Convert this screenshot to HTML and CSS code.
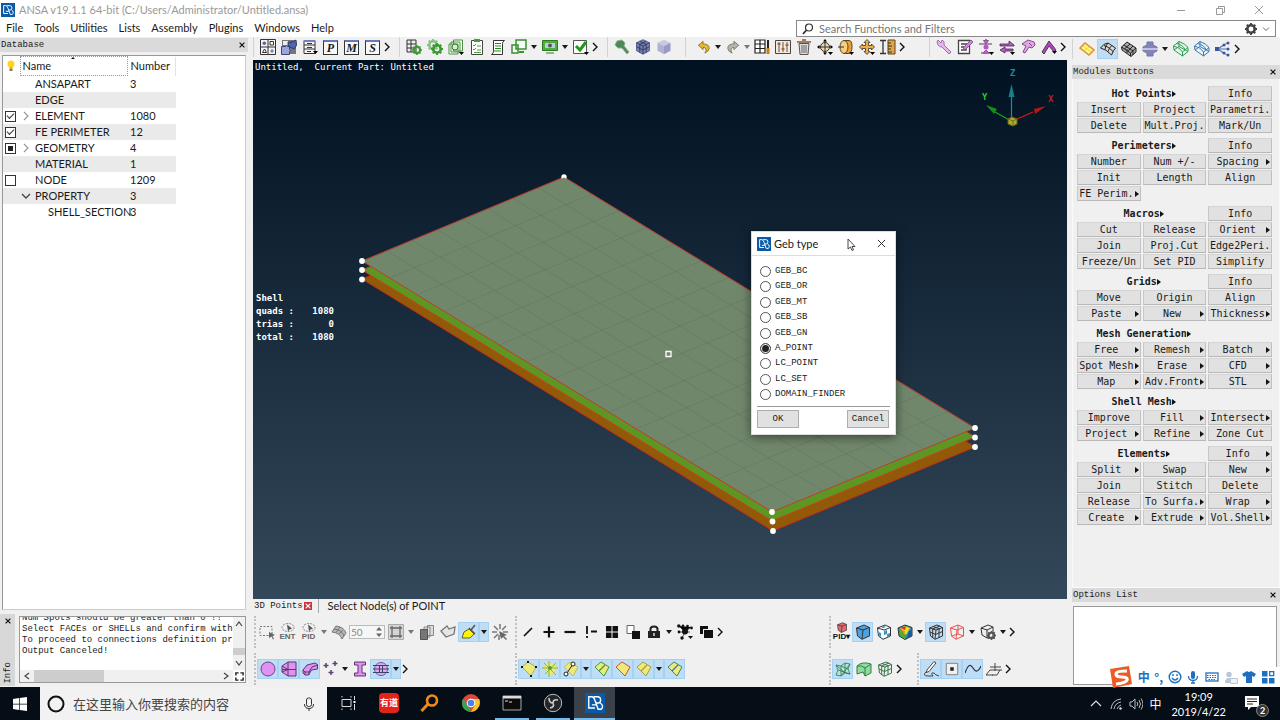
FILE: index.html
```html
<!DOCTYPE html>
<html lang="en">
<head>
<meta charset="utf-8">
<title>ANSA v19.1.1 64-bit</title>
<link rel="stylesheet" href="styles.css">
</head>
<body>
<svg class="sprite" aria-hidden="true">
<defs>
<symbol id="logo" viewBox="0 0 16 16"><path fill="#0b5aa5" d="M0 0h16v16H0z"/><path fill="none" stroke="#fff" stroke-width="1.100" d="M8 12H3V3h2.500q1.500 0 2.500 3l2.500 7H13q1-1 1-2.500T12 8M5.500 9.500H9M7 3h3q2.500 0 2.500 2.500T10.500 8H9"/></symbol>
<symbol id="grid4" viewBox="0 0 16 16"><path fill="#f4f4f4" stroke="#333" d="M.5.5h15v15H.5zM8 1v14M1 8h14"/><circle cx="4.300" cy="4.300" r="1.800" fill="#5768a8"/><path fill="#fff" stroke="#333" d="M10 2.500h3.500V6H10zM2.500 13.500l2-3.500 2 3.500z"/><circle cx="12" cy="12" r="1.700" fill="#7486c5"/></symbol>
<symbol id="puzzle" viewBox="0 0 16 16"><path fill="#777" d="M1 1h14v14H1z"/><path fill="#eee" d="M2 2h5v4H2z"/><path fill="#99a5dc" stroke="#39457c" d="M.5 7.500h4q1-2 2 0h2v3q3 1 0 2v3h-8z"/><path fill="#5265aa" stroke="#303a70" d="M7 3l3 1q0-3 2-1l3-2 .5 5-2 4-5-2q-2-2-1.500-5z"/></symbol>
<symbol id="drawer" viewBox="0 0 16 16"><path fill="#f7f7f7" stroke="#333" d="M2 1.500h11v13H2zM2 6h11M2 10h11"/><path fill="#6e80be" d="M2 1h11v2H2z"/><path stroke="#333" d="M5 4.500h5M5 8.500h5M5 12.500h4"/><path d="M11 12h5l-2.500 3z"/></symbol>
<symbol id="gear" viewBox="0 0 16 16"><circle cx="8" cy="8" r="5" fill="none" stroke="currentColor" stroke-width="3.500"/><path fill="none" stroke="currentColor" stroke-width="2.500" d="M8 0v3M8 13v3M0 8h3M13 8h3M2.300 2.300l2 2M11.700 11.700l2 2M2.300 13.700l2-2M11.700 4.300l2-2"/></symbol>
<symbol id="meshgear" viewBox="0 0 16 16"><path fill="#eee" stroke="#333" d="M1 1h9v12H1zM5 1v12M1 5h9M1 9h9"/><use href="#gear" x="6" y="6" width="10" height="10" color="#3f9a33"/></symbol>
<symbol id="gears" viewBox="0 0 16 16"><use href="#gear" x="0" y="0" width="12" height="12" color="#8ac086"/><use href="#gear" x="4" y="4" width="12" height="12" color="#3a9a30"/></symbol>
<symbol id="pages" viewBox="0 0 16 16"><path fill="#fff" stroke="#4c8f40" d="M5.500 1h9v11h-9zM3 3h9v10H3zM1 5h9v10H1z"/><circle cx="7" cy="8" r="3" fill="#d8ecd4" stroke="#26831f"/><path d="M11 13h5l-2.500 3z"/></symbol>
<symbol id="clip" viewBox="0 0 16 16"><path fill="#fff" stroke="#444" d="M2.500 1.500h11v14h-11z"/><path fill="#4c9a3c" d="M5 0h6v3H5z"/><path stroke="#4c9a3c" fill="none" d="M4 6l1 1 2-2M4 10l1 1 2-2M8 7h4M8 11h4M5 13.500h7"/></symbol>
<symbol id="scroll" viewBox="0 0 16 16"><path fill="#fff" stroke="#333" d="M3.500 1.500h11q-2 1-2 3v11h-11q2-1 2-3z"/><path stroke="#268a21" d="M5 4.500h6M5 7h6M5 9.500h6M4 12h7"/></symbol>
<symbol id="screens" viewBox="0 0 16 16"><path fill="#f4faf4" stroke="#3a9030" stroke-width="1.500" d="M5 1h10v9H5zM1 6h6v8H1z"/><path stroke="#3a9030" stroke-width="2" d="M8 13h5"/></symbol>
<symbol id="monitor" viewBox="0 0 16 16"><path fill="#4faf3c" stroke="#2d7a22" d="M.5 1.500h15v10H.5zM4 14h8"/><path fill="#bcd" d="M3 4h10v5H3z"/><circle cx="8" cy="6.500" r="2" fill="#555"/></symbol>
<symbol id="check" viewBox="0 0 16 16"><path fill="#fff" stroke="#555" d="M.5 1.500h13v13H.5z"/><path fill="none" stroke="#219619" stroke-width="3" d="M3 7l4 4 6-8"/><path d="M11 13h5l-2.500 3z"/></symbol>
<symbol id="torch" viewBox="0 0 16 16"><path fill="#4e8955" stroke="#8aae8b" d="M3 2l5-1 3 3-1 3 5 6-2 2-5-6-4 0-3-3z"/></symbol>
<symbol id="cube" viewBox="0 0 16 16"><path fill="currentColor" stroke="#39436f" stroke-width=".7" d="M8 .7l6.500 3v8L8 15.300l-6.500-3.600v-8z"/><path fill="none" stroke="#24304f" stroke-width=".8" d="M1.500 3.700L8 7l6.500-3.300M8 7v8M4.800 2.200l6.400 3.200v8.200M11.200 2.200L4.800 5.400v8.200M1.500 7.700L8 11l6.500-3.300"/></symbol>
<symbol id="softcube" viewBox="0 0 16 16"><path fill="#c8cae4" d="M8 .7l6.500 3L8 7 1.500 3.700z"/><path fill="#aeb1d2" d="M1.500 3.700L8 7v8.300l-6.500-3.600z"/><path fill="#989bc3" d="M14.500 3.700L8 7v8.300l6.500-3.600z"/></symbol>
<symbol id="undo" viewBox="0 0 16 16"><path fill="currentColor" stroke="#5b4a1c" stroke-width=".7" d="M1.500 6L7 1.500V4.500q7 0 7 5 0 3-5 5.500 2-3 1-5-1-1.500-3-1.500V11z"/></symbol>
<symbol id="tablepen" viewBox="0 0 16 16"><path fill="#fff" stroke="#222" stroke-width="1.200" d="M1 1h10v13H1zM6 1v13M1 5h10M1 9.500h10"/><path stroke="#222" stroke-width="2" d="M14 1v8"/><path stroke="#c48018" stroke-width="3" d="M14 9v6"/></symbol>
<symbol id="sliders" viewBox="0 0 16 16"><path fill="#f5e9dd" stroke="#444" d="M.5 1.500h15v13H.5z"/><path stroke="#555" d="M4 3v10M8 3v10M12 3v10"/><path stroke="#b34d22" stroke-width="1.500" d="M2.500 5h3M6.500 10h3M10.500 6h3"/></symbol>
<symbol id="trash" viewBox="0 0 16 16"><path fill="#ddd" stroke="#555" d="M3 4.500h10l-1 11H4z"/><path stroke="#666" d="M6 6v8M8 6v8M10 6v8"/><path stroke="#9a8262" stroke-width="2" d="M1 3h14M6 1h4"/></symbol>
<symbol id="target" viewBox="0 0 16 16"><circle cx="8" cy="8" r="4.500" fill="#eed8a8" stroke="#333"/><path stroke="#333" d="M8 2v12M2 8h12"/><path d="M8 0l2 2.500H6zM8 16l2-2.500H6zM0 8l2.500-2v4zM16 8l-2.500-2v4z"/><path d="M11 13h5l-2.500 3z"/></symbol>
<symbol id="barrel" viewBox="0 0 16 16"><path fill="#e9a33d" stroke="#5b431b" d="M6 1.500h5q3 0 3 6t-3 7H6z"/><ellipse cx="6" cy="8" rx="4" ry="6.500" fill="#f8cd7c" stroke="#5b431b"/><path stroke="#333" d="M0 8h6"/><path d="M11 13h5l-2.500 3z"/></symbol>
<symbol id="move" viewBox="0 0 16 16"><path fill="#edac45" stroke="#333" stroke-width=".8" d="M8 .5l3 3H9.500v3h3V5l3 3-3 3V9.500h-3v3H11l-3 3-3-3h1.500v-3h-3V11l-3-3 3-3v1.500h3v-3H5z"/><path d="M11 13h5l-2.500 3z"/></symbol>
<symbol id="ruler" viewBox="0 0 16 16"><path stroke="#333" stroke-width="1.300" d="M0 1.500h6M0 14.500h6M3 2v12"/><path fill="#e1a648" stroke="#5a461b" d="M8 1h7v14H8z"/><path stroke="#333" d="M8 4h3M8 7h4M8 10h3M8 13h4"/></symbol>
<symbol id="wrench" viewBox="0 0 16 16"><path fill="#e7b7ed" stroke="#a06aaa" d="M2 1l3 3 1-3q3 1 2 5l7 7-2 2-7-7q-4 0-5-5z"/></symbol>
<symbol id="note" viewBox="0 0 16 16"><path fill="#fff" stroke="#444" stroke-width="1.300" d="M1.500 1.500h11v13h-11zM4 5h6M4 8h4M4 11h6"/><path fill="#dd7de8" stroke="#865c92" d="M14 1l2 2-7 7-3 1 1-3z"/></symbol>
<symbol id="compress" viewBox="0 0 16 16"><path stroke="#444" stroke-width="1.200" d="M1 5h13M3 14h9M8 0v5"/><path fill="#d064e0" stroke="#875192" d="M5.500 1.500h5L8 5zM8 11l3 3H5z"/><circle cx="8" cy="8" r="2.500" fill="#c34bd6"/><path d="M11 13h5l-2.500 3z"/></symbol>
<symbol id="swap" viewBox="0 0 16 16"><path fill="#c453d7" stroke="#3a2a3e" stroke-width=".8" d="M1 5h9V2l5 4v1H1zM14 10H6V8l-5 3 5 3v-2h8z"/><path d="M11 13h5l-2.500 3z"/></symbol>
<symbol id="hammer" viewBox="0 0 16 16"><path fill="#e3a6eb" stroke="#7b5080" d="M2 5l6-4 6 2 1 3-3 3-3-1-4 6-2-1 3-6-2-1z"/><path stroke="#7b5080" d="M9 4l3 3"/></symbol>
<symbol id="angle" viewBox="0 0 16 16"><path fill="#b63dc8" stroke="#444" d="M1 13L8 2l7 9-2 2-5-6-5 8z"/><path d="M11 12h5l-2.500 3z"/></symbol>
<symbol id="facey" viewBox="0 0 16 16"><path fill="#fff880" stroke="#df8d3d" stroke-width="1.500" d="M1 7l5-5 9 7-5 5z"/><path stroke="#d7cf28" stroke-dasharray="2 1" d="M4 5l8 6M4 11l7-6"/></symbol>
<symbol id="mesh" viewBox="0 0 16 16"><path fill="currentColor" stroke="#222" d="M.5 7Q4 2 8 2l7.500 5q-2 2-4 7Q6 8 .5 7z"/><path fill="none" stroke="#222" d="M4 4.500q5 1 9 6M8 2q-3 3-3 6.500M12 4.500q-3 2-4 6"/></symbol>
<symbol id="solidmesh" viewBox="0 0 16 16"><path fill="#a8a8a8" stroke="#222" d="M.5 6L6 1l9 6v4l-5 4.500L1 9z"/><path fill="none" stroke="#222" d="M.5 6l9 6L15 7M3 4l9 6v4M6 8v4M9.500 12v3M9 3L3.500 8M12 5L7 10"/></symbol>
<symbol id="section" viewBox="0 0 16 16"><path fill="#8484b8" stroke="#7373aa" d="M5 1h6v3l4 2v4l-4 2v3H5v-3l-4-2V6l4-2z"/><path stroke="#d9d9ef" stroke-width="1.500" d="M0 8h16"/></symbol>
<symbol id="wiremesh" viewBox="0 0 16 16"><path fill="#e8f5ec" fill-opacity=".6" stroke="currentColor" d="M.5 5L6 .5q6 2 9 6v4L9.500 15 1 9z"/><path fill="none" stroke="currentColor" d="M.5 5q6 1 9 6L15 6.500M6 .5v5L1 9M6 5.500l9 5M9.500 11v4M3.500 2.500Q10 4 12 8.500"/></symbol>
<symbol id="spread" viewBox="0 0 16 16"><path stroke="#5470b0" d="M3 8h10M3 8l9-6M3 8l9 6M3 8l5-4M3 8l5 4"/><path fill="#3d56a4" d="M0 6h4v4H0z"/><g fill="#3d56a4"><circle cx="13" cy="2" r="1.500"/><circle cx="9" cy="4" r="1.500"/><circle cx="13" cy="8" r="1.500"/><circle cx="9" cy="12" r="1.500"/><circle cx="13" cy="14" r="1.500"/></g></symbol>
<symbol id="pick" viewBox="0 0 16 16"><path fill="none" stroke="#777" stroke-dasharray="2 1.500" d="M1 2.500h12v9H1z"/><path fill="#666" d="M10 8l6 3-2.500 1L15 15l-1 .5-1.500-3L10 14z"/></symbol>
<symbol id="pickring" viewBox="0 0 14 10"><ellipse cx="7" cy="5" rx="6" ry="4" fill="none" stroke="#888" stroke-dasharray="2 1"/><path fill="#555" d="M6 2l5 4-2.500 1L7 9z"/></symbol>
<symbol id="greymesh" viewBox="0 0 16 16"><path fill="#b5b5b5" stroke="#777" d="M1 8l4-6q8 1 10 7l-4 6Q9 9 1 8z"/><path fill="none" stroke="#777" d="M3 5q8 1 10 7M9 3L5 8.500M12 6l-4 4"/></symbol>
<symbol id="crop" viewBox="0 0 16 16"><path fill="#d4d4d4" stroke="#aaa" d="M.5.5h15v15H.5z"/><path fill="#eee" stroke="#666" stroke-width="1.300" d="M4 2v12M12 2v12M2 4h12M2 12h12"/></symbol>
<symbol id="copies" viewBox="0 0 16 16"><path fill="#ddd" stroke="#888" d="M8.500 1.500h6v10h-6zM5 3h6v10H5z"/><path fill="#777" stroke="#555" d="M1.500 5.500h7v10h-7z"/></symbol>
<symbol id="poly" viewBox="0 0 16 16"><path fill="#e5e5e5" stroke="#777" stroke-width="1.300" d="M1 7l6-5 2 3 6-2-1 7-8 3z"/></symbol>
<symbol id="marker" viewBox="0 0 16 16"><path fill="#fff500" stroke="#665f20" d="M1 14l2-6 5-3 5 5-4 4z"/><path stroke="#555" stroke-width="1.500" d="M8 4l6 6M10 6l4-5"/></symbol>
<symbol id="burst" viewBox="0 0 16 16"><path stroke="#777" stroke-width="1.500" d="M8 0v5M0 8h5M11 8h5M2 2l4 4M14 2l-4 4M2 14l4-4M7 11v5"/><path fill="#666" d="M7 7l8 4-3 1 3 3-1 1-3-3-2 2z"/></symbol>
<symbol id="line" viewBox="0 0 16 16"><path stroke="#111" stroke-width="1.700" d="M4 12l8-8"/></symbol>
<symbol id="plus" viewBox="0 0 16 16"><path stroke="#111" stroke-width="2.200" d="M8 2.500v11M2.500 8h11"/></symbol>
<symbol id="minus" viewBox="0 0 16 16"><path stroke="#111" stroke-width="2.200" d="M2.500 8h11"/></symbol>
<symbol id="bang" viewBox="0 0 16 16"><path stroke="#111" stroke-width="1.800" d="M4 2v8M4 12v2M8 7.500h6"/></symbol>
<symbol id="four" viewBox="0 0 16 16"><path fill="#111" d="M2 2h5.500v5.500H2zM8.500 2H14v5.500H8.500zM2 8.500h5.500V14H2zM8.500 8.500H14V14H8.500z"/></symbol>
<symbol id="invert" viewBox="0 0 16 16"><path fill="#fff" stroke="#666" d="M2 1.500h7v8H2z"/><path fill="#111" d="M7 7h8v8H7z"/></symbol>
<symbol id="lock" viewBox="0 0 16 16"><path fill="#222" d="M2 7h12v7H2z"/><path fill="none" stroke="#222" stroke-width="2" d="M4.500 7V5q0-2.500 3.500-2.500T11.500 5v2"/><path stroke="#ddd" stroke-width="1.500" d="M8 9v3"/></symbol>
<symbol id="cluster" viewBox="0 0 16 16"><path stroke="#111" stroke-width=".7" d="M2 2l6 6 6-5M3 8h10M5 14l3-6"/><g fill="#111"><circle cx="8" cy="7.500" r="3"/><circle cx="1.800" cy="2" r="1.700"/><circle cx="6" cy="1.800" r="1.300"/><circle cx="10.500" cy="2" r="1.300"/><circle cx="14.500" cy="4" r="1.400"/><circle cx="2" cy="8" r="1.400"/><circle cx="5" cy="14" r="1.700"/><path d="M11 12h5l-2.500 3z"/></g></symbol>
<symbol id="stack" viewBox="0 0 16 16"><path fill="#111" d="M2 2h8v3H5v5H2z"/><path fill="#111" d="M6 6h9v8H6z"/></symbol>
<symbol id="colorcube" viewBox="0 0 16 16"><path fill="currentColor" stroke="#333" d="M1.500 4L9 1l5.500 2.500V12L7 15.300 2.500 12z"/><path fill="none" stroke="#333" d="M1.500 4L8 6l6.500-2.500M8 6l-1 9"/></symbol>
<symbol id="checkcube" viewBox="0 0 16 16"><path fill="#fff" stroke="#333" d="M1.500 4L9 1l5.500 2.500V12L7 15.300 2.500 12z"/><path fill="#3b93c8" d="M8 7l3-1v4l3-1v3l-3 1v-3l-3 1zM2.500 8L5 9v4l-2.500-2zM5 3l3-1 2 1-3 1.300z"/><path fill="none" stroke="#333" d="M1.500 4L8 6l6.500-2.500"/></symbol>
<symbol id="rainbow" viewBox="0 0 16 16"><path fill="#2d94a8" stroke="#333" d="M1 4l7-3 7 2.500V12l-7 3.500L2 12z"/><path fill="#f0da22" d="M3 4l5-2 5 2-4 7z"/><path fill="#50ad30" d="M2 5l6 3v7l-5-3z"/><path fill="#ef9b20" d="M4 5l4 2v4z"/><path fill="#df3328" d="M3 3.800l6-1.500L8 6z"/><path fill="#1556ae" d="M12 7l2.500-1v6L10 14z"/></symbol>
<symbol id="wirecube" viewBox="0 0 16 16"><path fill="none" stroke="currentColor" d="M1.500 4L9 1l5.500 2.500V12L7 15.300 2.500 12zM1.500 4L8 6l6.500-2.500M8 6l-1 9M4.700 5v9M11 4.700v9M2 8l5.500 2.500 7-3M5 2.500l6.500 2.300M12 2L4.500 5"/></symbol>
<symbol id="redwire" viewBox="0 0 16 16"><path fill="none" stroke="#e55454" d="M1.500 4L9 1l5.500 2.500V12L7 15.300 2.500 12zM1.500 4L8 6l6.500-2.500M8 6l-1 9M9 1v9l5.500 2M9 10l-6.500 2"/></symbol>
<symbol id="cubegear" viewBox="0 0 16 16"><path fill="#eee" stroke="#333" d="M1 4l7-3 5 2v10l-6 1-5-3zM1 4l6 2 6-3M7 6v8"/><use href="#gear" x="7" y="7" width="9" height="9" color="#555"/></symbol>
<symbol id="disc" viewBox="0 0 16 16"><circle cx="8" cy="8" r="7" fill="#df91f4" stroke="#6a4775"/></symbol>
<symbol id="trap" viewBox="0 0 16 16"><path fill="#df91f4" stroke="#5d3969" d="M1 5l6-4h8v14H7l-6-4zM7 1v14M1 8.500h14M1 5l6 3.500L1 11"/></symbol>
<symbol id="bar3d" viewBox="0 0 16 16"><path fill="#df91f4" stroke="#5d3969" d="M1 9l4-5 8-2 2.500 1.500v4.500l-6 1-3 5H3l-2-2z"/><path fill="none" stroke="#5d3969" d="M1 9l2 2h4l3-5 5.500-2M3 11v3M7 11v3"/></symbol>
<symbol id="crosses" viewBox="0 0 16 16"><path stroke="#604070" stroke-width="1.500" d="M3 2v5M.5 4.500h5M12 0v5M9.500 2.500h5M8 9v5M5.500 11.500h5"/></symbol>
<symbol id="beam" viewBox="0 0 16 16"><path fill="#df91f4" stroke="#5d3969" d="M2.500 1h11v3H10v8h3.500v3h-11v-3H6V4H2.500z"/></symbol>
<symbol id="beamring" viewBox="0 0 16 16"><circle cx="8" cy="8" r="6.500" fill="#dfacf1" stroke="#6f5a93"/><path stroke="#35456d" d="M0 4.500h16M0 8h16M0 11.500h16M6.500 4v8M9.500 4v8"/></symbol>
<symbol id="yface" viewBox="0 0 16 16"><path fill="#eeea77" stroke="currentColor" d="M1 6l6-5 8 5-5 9z"/></symbol>
<symbol id="dots" viewBox="0 0 16 16"><path fill="#111" d="M0 5h2v2H0zM6 0h2v2H6zM14 5h2v2h-2zM9 14h2v2H9z"/></symbol>
<symbol id="rays" viewBox="0 0 16 16"><path stroke="#83ba42" d="M0 7h16M7 0v16M2 2l12 12M14 2L3 13"/><circle cx="8" cy="7" r="2" fill="#599c30"/></symbol>
<symbol id="ends" viewBox="0 0 16 16"><path stroke="#222" d="M4 12l6-9"/><circle cx="3" cy="13" r="2" fill="#fff" stroke="#222"/><circle cx="10" cy="3" r="2" fill="#fff" stroke="#222"/></symbol>
<symbol id="split" viewBox="0 0 16 16"><path stroke="currentColor" stroke-width="1.300" d="M5 10l6-6"/></symbol>
<symbol id="greencube" viewBox="0 0 16 16"><path fill="#8edb9d" stroke="#347d48" d="M1 5q5-5 14-2v9l-6 3-2-4-6 2z"/><path fill="none" stroke="#347d48" d="M1 5q5-1 8 2l6-4M9 7v8"/></symbol>
<symbol id="greenwire" viewBox="0 0 16 16"><path fill="#b8e2d1" stroke="#257c55" stroke-width=".8" d="M1 4l5 1 4-3 5 1-2 5 2 5-5-1-4 3-5-1 2-5zM1 4l9 8M6 5l7 3M3 9l12 4M15 3L6 15M6 5v10M10 2v10"/></symbol>
<symbol id="pencil" viewBox="0 0 16 16"><path fill="#fff" stroke="#444" d="M4 9L11 .5 13 2 6 10.500l-3 1z"/><path fill="none" stroke="#444" d="M3 11q-4 4 2 4h5q-3-4 1-3 1 2 5 3"/></symbol>
<symbol id="button" viewBox="0 0 16 16"><path fill="#f0f0f0" stroke="#777" d="M1.500 1.500h13v13h-13z"/><path fill="#222" d="M6 6h4v4H6z"/></symbol>
<symbol id="wave" viewBox="0 0 16 16"><path fill="none" stroke="#263344" stroke-width="1.200" d="M0 12Q4 0 8 7t8-2"/></symbol>
<symbol id="plane" viewBox="0 0 16 16"><path fill="none" stroke="#444" d="M0 14l4-5h12M6 14h5l3-5M4 6h11M9 2v8M0 14h7"/></symbol>
<symbol id="more" viewBox="0 0 8 12"><path fill="none" stroke="#111" stroke-width="1.400" d="M2 2l4 4-4 4"/></symbol>
<symbol id="caret" viewBox="0 0 8 6"><path fill="currentColor" d="M1 1h6L4 5z"/></symbol>
<symbol id="x" viewBox="0 0 10 10"><path fill="none" stroke="currentColor" d="M1 1l8 8M9 1L1 9"/></symbol>
</defs>
</svg>

<header class="titlebar">
  <svg class="i14"><use href="#logo"/></svg>
  <h1>ANSA v19.1.1 64-bit (C:/Users/Administrator/Untitled.ansa)</h1>
  <div class="winbtns">
    <button aria-label="Minimize"><svg viewBox="0 0 10 10"><path stroke="#999" d="M1 5.500h8"/></svg></button>
    <button aria-label="Restore"><svg viewBox="0 0 10 10"><path fill="none" stroke="#999" d="M1.500 3.500h6v6h-6zM3.500 3V1.500h6v6H8"/></svg></button>
    <button aria-label="Close"><svg><use href="#x"/></svg></button>
  </div>
</header>
<div class="menurow">
  <nav class="menu"><button>File</button><button>Tools</button><button>Utilities</button><button>Lists</button><button>Assembly</button><button>Plugins</button><button>Windows</button><button>Help</button></nav>
  <div class="search">
    <svg class="i12" viewBox="0 0 12 12"><circle cx="7" cy="4.500" r="3.500" fill="none" stroke="#333" stroke-width="1.200"/><path stroke="#333" stroke-width="1.800" d="M4.500 7L1 11"/></svg>
    <input type="search" placeholder="Search Functions and Filters" aria-label="Search Functions and Filters">
    <svg class="i12 dark"><use href="#gear"/></svg>
    <svg class="i8" viewBox="0 0 8 8"><path fill="none" stroke="#666" d="M1 2.500l3 3 3-3"/></svg>
  </div>
</div>

<div class="work">
  <aside class="left">
    <h2 class="dock">Database<button aria-label="Close Database"><svg><use href="#x"/></svg></button></h2>
    <div class="treebox">
      <table class="tree">
        <thead><tr><th><svg class="bulb" viewBox="0 0 8 12"><circle cx="4" cy="4" r="3.500" fill="#ffd21c"/><path fill="#e5ad10" d="M2.500 7h3v2h-3z"/><path fill="#777" d="M2.500 9h3v2h-3z"/></svg></th><th class="name">Name</th><th>Number</th></tr></thead>
        <tbody>
        <tr><td></td><td><span class="exp"></span>ANSAPART</td><td>3</td></tr>
        <tr><td></td><td><span class="exp"></span>EDGE</td><td></td></tr>
        <tr><td><input type="checkbox" checked aria-label="ELEMENT"></td><td><svg class="exp" viewBox="0 0 15 10"><path fill="none" stroke="#999" stroke-width="1.200" d="M4 1l4 4-4 4"/></svg>ELEMENT</td><td>1080</td></tr>
        <tr><td><input type="checkbox" checked aria-label="FE PERIMETER"></td><td><span class="exp"></span>FE PERIMETER</td><td>12</td></tr>
        <tr><td><input type="checkbox" class="part" aria-label="GEOMETRY"></td><td><svg class="exp" viewBox="0 0 15 10"><path fill="none" stroke="#999" stroke-width="1.200" d="M4 1l4 4-4 4"/></svg>GEOMETRY</td><td>4</td></tr>
        <tr><td></td><td><span class="exp"></span>MATERIAL</td><td>1</td></tr>
        <tr><td><input type="checkbox" aria-label="NODE"></td><td><span class="exp"></span>NODE</td><td>1209</td></tr>
        <tr><td></td><td><svg class="exp" viewBox="0 0 15 10"><path fill="none" stroke="#444" stroke-width="1.300" d="M2 3l4 4 4-4"/></svg>PROPERTY</td><td>3</td></tr>
        <tr><td></td><td class="deep">SHELL_SECTION</td><td>3</td></tr>
        </tbody>
      </table>
    </div>
    <section class="info">
      <div class="infotab"><button aria-label="Close Info"><svg><use href="#x"/></svg></button><span>Info</span></div>
      <div class="logbox">
        <div class="log"><p>Num Spots should be greater than 0 !!</p><p>Select FACEs or SHELLs and confirm with</p><p>To proceed to connections definition pr</p><p>Output Canceled!</p></div>
        <div class="vbar"><svg viewBox="0 0 8 8"><path fill="none" stroke="#444" stroke-width="1.200" d="M1 6l3-4 3 4"/></svg><i></i><svg viewBox="0 0 8 8"><path fill="none" stroke="#444" stroke-width="1.200" d="M1 2l3 4 3-4"/></svg></div>
        <div class="hbar"><svg viewBox="0 0 8 8"><path fill="none" stroke="#444" stroke-width="1.200" d="M6 1L2 4l4 3"/></svg><i></i><svg viewBox="0 0 8 8"><path fill="none" stroke="#444" stroke-width="1.200" d="M2 1l4 3-4 3"/></svg></div>
        <svg class="expand" viewBox="0 0 10 10"><path fill="none" stroke="#222" stroke-width="1.600" d="M1 4V1h3M6 1h3v3M9 6v3H6M4 9H1V6"/></svg>
      </div>
    </section>
  </aside>

  <main class="center">
    <div class="bar top">
      <div class="grp"><button><svg><use href="#grid4"/></svg></button><button><svg><use href="#puzzle"/></svg></button><button><svg><use href="#drawer"/></svg></button><button class="letter">P</button><button class="letter">M</button><button class="letter">S</button><button class="mo"><svg><use href="#more"/></svg></button></div>
      <div class="grp"><button><svg><use href="#meshgear"/></svg></button><button><svg><use href="#gears"/></svg></button><button><svg><use href="#pages"/></svg></button><button><svg><use href="#clip"/></svg></button><button><svg><use href="#scroll"/></svg></button><button><svg><use href="#screens"/></svg></button><button class="ca"><svg><use href="#caret"/></svg></button><button><svg><use href="#monitor"/></svg></button><button class="ca"><svg><use href="#caret"/></svg></button><button><svg><use href="#check"/></svg></button><button class="mo"><svg><use href="#more"/></svg></button></div>
      <div class="grp"><button><svg><use href="#torch"/></svg></button><button><svg color="#7482b5"><use href="#cube"/></svg></button><button><svg><use href="#softcube"/></svg></button></div>
      <div class="grp wide"><button><svg class="i14" color="#e5b62f"><use href="#undo"/></svg></button><button class="ca narrow"><svg><use href="#caret"/></svg></button><button><svg class="i14 flip" color="#b5b5b5"><use href="#undo"/></svg></button><button class="ca narrow grey"><svg><use href="#caret"/></svg></button><button><svg><use href="#tablepen"/></svg></button><button><svg><use href="#sliders"/></svg></button><button><svg><use href="#trash"/></svg></button><button><svg><use href="#target"/></svg></button><button><svg><use href="#barrel"/></svg></button><button><svg><use href="#move"/></svg></button><button><svg><use href="#ruler"/></svg></button><button class="mo"><svg><use href="#more"/></svg></button></div>
      <div class="grp last"><button><svg><use href="#wrench"/></svg></button><button><svg><use href="#note"/></svg></button><button><svg><use href="#compress"/></svg></button><button><svg><use href="#swap"/></svg></button><button><svg><use href="#hammer"/></svg></button><button><svg><use href="#angle"/></svg></button><button class="mo"><svg><use href="#more"/></svg></button></div>
    </div>

    <section class="view">
      <svg class="scene" viewBox="253 60 814 539" preserveAspectRatio="xMidYMid slice">
        <defs>
          <pattern id="cells" width="10" height="10" patternUnits="userSpaceOnUse" patternTransform="matrix(2.740 1.673 -2.525 1.050 564 177)"><path fill="none" stroke="#33452f" stroke-opacity=".35" stroke-width=".3" d="M0 0h10M0 0v10"/></pattern>
          <linearGradient id="sky" x2="0" y2="1"><stop offset="0" stop-color="#001121"/><stop offset="1" stop-color="#33485a"/></linearGradient>
        </defs>
        <path fill="url(#sky)" d="M253 60h814v539H253z"/>
        <path fill="#925a08" stroke="#c52c17" d="M564 196l411 251-202 84-411-252z"/>
        <path fill="#5e9624" stroke="#c8401c" d="M564 187l411 250-203 84-410-251z"/>
        <path fill="#71876c" d="M564 177l411 251-203 84-410-251z"/>
        <path fill="url(#cells)" stroke="#c23c2e" d="M564 177l411 251-203 84-410-251z"/>
        <g fill="#fff"><circle cx="564" cy="177" r="2.700"/><circle cx="362" cy="261" r="2.900"/><circle cx="362" cy="270" r="2.900"/><circle cx="362" cy="279.500" r="2.900"/><circle cx="975" cy="428" r="2.900"/><circle cx="975" cy="437.500" r="2.900"/><circle cx="975" cy="447" r="2.900"/><circle cx="772" cy="512" r="2.900"/><circle cx="772.500" cy="521.500" r="2.900"/><circle cx="773" cy="531" r="2.900"/></g>
        <path fill="#71876c" d="M562 178.500l2-1 3 1.500v3h-5z"/>
        <path fill="none" stroke="#fff" stroke-width="1.300" d="M666 351.500h5v5h-5z"/>
        <path stroke="#14939a" stroke-width="1.200" d="M1011.500 120V92"/><path fill="#17808a" d="M1011.500 84l3 13h-6z"/>
        <path stroke="#d51b13" stroke-width="1.200" d="M1013 121l20-9"/><path fill="#b91612" d="M1046 106l-12 3 1 5z"/>
        <path stroke="#16a51c" stroke-width="1.200" d="M1011 121l-16-9"/><path fill="#129018" d="M986 105l11 4-3 5z"/>
        <path fill="#b0a928" stroke="#5e6521" d="M1008 119l4-2 5 2v5l-4 2-5-2z"/><path fill="none" stroke="#6b6d20" d="M1008 119l5 2 4-2M1013 121v5"/>
        <g class="axis"><text x="1010" y="76" fill="#11939e">Z</text><text x="1048" y="102" fill="#c31d18">X</text><text x="982" y="100" fill="#1cd31f">Y</text></g>
      </svg>
      <p class="caption">Untitled,&nbsp; Current Part: Untitled</p>
      <table class="stats"><caption>Shell</caption><tr><th>quads :</th><td>1080</td></tr><tr><th>trias :</th><td>0</td></tr><tr><th>total :</th><td>1080</td></tr></table>

      <form class="dialog">
        <div class="dtitle"><svg class="i14"><use href="#logo"/></svg><h2>Geb type</h2><button type="button" aria-label="Close"><svg><use href="#x"/></svg></button></div>
        <fieldset>
          <label><input type="radio" name="geb">GEB_BC</label>
          <label><input type="radio" name="geb">GEB_OR</label>
          <label><input type="radio" name="geb">GEB_MT</label>
          <label><input type="radio" name="geb">GEB_SB</label>
          <label><input type="radio" name="geb">GEB_GN</label>
          <label><input type="radio" name="geb" checked>A_POINT</label>
          <label><input type="radio" name="geb">LC_POINT</label>
          <label><input type="radio" name="geb">LC_SET</label>
          <label><input type="radio" name="geb">DOMAIN_FINDER</label>
        </fieldset>
        <div class="dfoot"><button type="button">OK</button><button type="button">Cancel</button></div>
        <svg class="cursor" viewBox="0 0 9 13"><path fill="#fff" stroke="#333" stroke-width=".9" d="M1 1v10l2.500-2 1.500 3.500 1.500-.7L5 8.500h3z"/></svg>
      </form>
    </section>

    <div class="status"><span class="tag">3D Points</span><button class="redx" aria-label="Close 3D Points"><svg><use href="#x"/></svg></button><span class="hint">Select Node(s) of POINT</span></div>

    <div class="bar low tight">
      <div class="grp"><button><svg><use href="#pick"/></svg></button><button class="cap"><svg><use href="#pickring"/></svg><b>ENT</b></button><button class="cap"><svg><use href="#pickring"/></svg><b>PID</b></button><button class="ca grey"><svg><use href="#caret"/></svg></button><button class="slim"><svg><use href="#greymesh"/></svg></button><div class="spin"><input type="number" value="50" aria-label="Angle"><svg viewBox="0 0 6 12"><path fill="#666" d="M0 4.500h6L3 1zM0 7.500h6L3 11z"/></svg></div><button><svg><use href="#crop"/></svg></button><button class="ca grey"><svg><use href="#caret"/></svg></button><button><svg><use href="#copies"/></svg></button><button><svg><use href="#poly"/></svg></button><button class="on"><svg><use href="#marker"/></svg></button><button class="ca on"><svg><use href="#caret"/></svg></button><button><svg><use href="#burst"/></svg></button></div>
      <div class="grp"><button><svg><use href="#line"/></svg></button><button><svg><use href="#plus"/></svg></button><button><svg><use href="#minus"/></svg></button><button><svg><use href="#bang"/></svg></button><button><svg><use href="#four"/></svg></button><button><svg><use href="#invert"/></svg></button><button><svg><use href="#lock"/></svg></button><button class="ca"><svg><use href="#caret"/></svg></button><button><svg><use href="#cluster"/></svg></button><button><svg><use href="#stack"/></svg></button><button class="mo"><svg><use href="#more"/></svg></button></div>
      <div class="grp"><button class="cap dk"><svg color="#df6b70"><use href="#colorcube"/></svg><b>PID▾</b></button><button class="on"><svg color="#4ba2e3"><use href="#colorcube"/></svg></button><button><svg><use href="#checkcube"/></svg></button><button><svg><use href="#rainbow"/></svg></button><button class="ca"><svg><use href="#caret"/></svg></button><button class="on"><svg color="#333"><use href="#wirecube"/></svg></button><button><svg><use href="#redwire"/></svg></button><button class="ca"><svg><use href="#caret"/></svg></button><button><svg><use href="#cubegear"/></svg></button><button class="ca"><svg><use href="#caret"/></svg></button><button class="mo"><svg><use href="#more"/></svg></button></div>
    </div>
    <div class="bar low">
      <div class="grp"><button class="on"><svg><use href="#disc"/></svg></button><button class="on"><svg><use href="#trap"/></svg></button><button class="on"><svg><use href="#bar3d"/></svg></button><button><svg><use href="#crosses"/></svg></button><button class="ca narrow"><svg><use href="#caret"/></svg></button><button><svg><use href="#beam"/></svg></button><button class="on"><svg><use href="#beamring"/></svg></button><button class="ca on"><svg><use href="#caret"/></svg></button><button class="mo"><svg><use href="#more"/></svg></button></div>
      <div class="grp"><button class="on"><svg color="#b3ad5c"><use href="#yface"/><use href="#dots"/></svg></button><button class="on"><svg color="#e0dc88"><use href="#yface"/><use href="#rays"/></svg></button><button class="on"><svg color="#c2bb62"><use href="#yface"/><use href="#ends"/></svg></button><button class="ca on"><svg><use href="#caret"/></svg></button><button class="on"><svg color="#3d9a4b"><use href="#yface"/><use href="#split"/></svg></button><button class="on"><svg color="#e04b35"><use href="#yface"/></svg></button><button class="on"><svg color="#a39b47"><use href="#yface"/><use href="#split"/></svg></button><button class="ca on"><svg><use href="#caret"/></svg></button><button class="on"><svg color="#39828a"><use href="#yface"/><use href="#split"/></svg></button></div>
      <div class="pair">
        <div class="grp"><button class="on"><svg><use href="#greenwire"/></svg></button><button><svg><use href="#greencube"/></svg></button><button><svg color="#38754a"><use href="#wirecube"/></svg></button><button class="mo"><svg><use href="#more"/></svg></button></div>
        <div class="grp"><button class="on"><svg><use href="#pencil"/></svg></button><button class="on"><svg class="i14"><use href="#button"/></svg></button><button class="on"><svg><use href="#wave"/></svg></button><button><svg><use href="#plane"/></svg></button><button class="mo"><svg><use href="#more"/></svg></button></div>
      </div>
    </div>
  </main>

  <aside class="right">
    <div class="bar mesh">
      <div class="grp"><button><svg><use href="#facey"/></svg></button><button class="on"><svg color="#d8d8d8"><use href="#mesh"/></svg></button><button><svg><use href="#solidmesh"/></svg></button><button><svg><use href="#section"/></svg></button><button class="ca"><svg><use href="#caret"/></svg></button><button><svg color="#2e9c50"><use href="#wiremesh"/></svg></button><button><svg color="#3677bd"><use href="#wiremesh"/></svg></button><button><svg><use href="#spread"/></svg></button><button class="mo"><svg><use href="#more"/></svg></button></div>
    </div>
    <h2 class="dock">Modules Buttons<button aria-label="Close Modules Buttons"><svg><use href="#x"/></svg></button></h2>
    <div class="modules">
      <section><h3>Hot Points</h3><button>Info</button><button>Insert</button><button>Project</button><button>Parametri.</button><button>Delete</button><button>Mult.Proj.</button><button>Mark/Un</button></section>
      <section><h3>Perimeters</h3><button>Info</button><button>Number</button><button>Num +/-</button><button class="sub">Spacing</button><button>Init</button><button>Length</button><button>Align</button><button class="sub">FE Perim.</button></section>
      <section><h3>Macros</h3><button>Info</button><button>Cut</button><button>Release</button><button class="sub">Orient</button><button>Join</button><button>Proj.Cut</button><button>Edge2Peri.</button><button>Freeze/Un</button><button>Set PID</button><button>Simplify</button></section>
      <section><h3>Grids</h3><button>Info</button><button>Move</button><button>Origin</button><button>Align</button><button class="sub">Paste</button><button class="sub">New</button><button class="sub">Thickness</button></section>
      <section><h3>Mesh Generation</h3><span></span><button class="sub">Free</button><button class="sub">Remesh</button><button class="sub">Batch</button><button class="sub">Spot Mesh</button><button class="sub">Erase</button><button class="sub">CFD</button><button class="sub">Map</button><button class="sub">Adv.Front</button><button class="sub">STL</button></section>
      <section><h3>Shell Mesh</h3><span></span><button>Improve</button><button class="sub">Fill</button><button class="sub">Intersect</button><button class="sub">Project</button><button class="sub">Refine</button><button>Zone Cut</button></section>
      <section><h3>Elements</h3><button class="sub">Info</button><button class="sub">Split</button><button>Swap</button><button class="sub">New</button><button>Join</button><button>Stitch</button><button>Delete</button><button>Release</button><button class="sub">To Surfa.</button><button class="sub">Wrap</button><button class="sub">Create</button><button class="sub">Extrude</button><button class="sub">Vol.Shell</button></section>
    </div>
    <h2 class="dock">Options List<button aria-label="Close Options List"><svg><use href="#x"/></svg></button></h2>
    <div class="options"></div>
  </aside>
</div>

<div class="ime">
  <svg class="sogou" viewBox="0 0 24 24"><path fill="#ee5a24" d="M1 4L20 1l3 18-19 4z"/><path fill="none" stroke="#fff" stroke-width="3.200" d="M18 6Q7 6 7 9t6 3 5 3-11 4"/></svg>
  <span>中</span><span>°,</span>
  <svg viewBox="0 0 14 14"><circle cx="7" cy="7" r="5.800" fill="none" stroke="#1f6fc0" stroke-width="1.400"/><path fill="none" stroke="#1f6fc0" stroke-width="1.400" d="M5 4v2M9 4v2M4 8q3 4 6 0"/></svg>
  <svg viewBox="0 0 14 14"><rect x="5" y="1" width="4" height="8" rx="2" fill="#1f6fc0"/><path fill="none" stroke="#1f6fc0" stroke-width="1.300" d="M2.500 6q0 4.500 4.500 4.500T11.500 6M7 10v3M5 13h4"/></svg>
  <svg viewBox="0 0 14 14"><rect x="1" y="3" width="12" height="8" fill="none" stroke="#1f6fc0" stroke-width="1.300"/><path stroke="#1f6fc0" stroke-dasharray="1.500 1" d="M2 5.500h10M2 7.500h10M3.500 9.500h7"/></svg>
  <svg viewBox="0 0 14 14"><path fill="#b8c6d8" d="M1 13q0-5 4-5t4 5z"/><circle cx="5" cy="4.500" r="2.700" fill="#b8c6d8"/><path fill="#eef2f6" stroke="#b8c6d8" d="M6.500 8.500h7v5h-7z"/></svg>
  <svg viewBox="0 0 14 14"><path fill="#1f6fc0" d="M5 1q2 2 4 0l5 3-2 3-2-1v7H4V6L2 7 0 4z"/></svg>
  <svg viewBox="0 0 14 14"><path fill="#1f6fc0" d="M1 1h5.500v5.500H1zM1 8h5.500v5.500H1zM8 8h5.500v5.500H8z"/><path fill="none" stroke="#1f6fc0" stroke-width="1.300" d="M8.700 1.700h4v4h-4z"/></svg>
</div>

<footer class="taskbar">
  <button class="start" aria-label="Start"><svg viewBox="0 0 14 14"><path fill="#fff" d="M0 2l6-1v5.700H0zM6.700 1L14 0v6.700H6.700zM0 7.400h6V13l-6-1zM6.700 7.400H14V14l-7.300-1z"/></svg></button>
  <label class="tsearch"><svg class="i18" viewBox="0 0 18 18"><circle cx="9" cy="9" r="7.500" fill="none" stroke="#111" stroke-width="2"/></svg><input type="text" placeholder="在这里输入你要搜索的内容"><svg class="i14" viewBox="0 0 14 14"><rect x="4.500" y="1" width="5" height="8.500" rx="2" fill="none" stroke="#333"/><path fill="none" stroke="#333" d="M2.500 7q0 4.500 4.500 4.500T11.500 7M7 11v3"/></svg></label>
  <div class="apps">
    <button aria-label="Task View"><svg viewBox="0 0 20 20"><path fill="none" stroke="#ddd" d="M4 6.500h9v7H4zM4 4.500V3M13 4.500V3M4 15.500V17M13 15.500V17M16.500 3v4M16.500 11v6"/><path fill="#fff" d="M15.500 8h2v2h-2z"/></svg></button>
    <button class="youdao"><span>有道</span></button>
    <button aria-label="Everything"><svg viewBox="0 0 20 20"><circle cx="12" cy="7.500" r="5" fill="none" stroke="#f28b16" stroke-width="2.600"/><path stroke="#f28b16" stroke-width="3" d="M8 11l-6.500 7"/></svg></button>
    <button aria-label="Chrome"><svg viewBox="0 0 20 20"><circle cx="10" cy="10" r="9" fill="#d94a3c"/><path fill="#34a456" d="M2.200 5.500L8 15l2 4Q1 18 1 10q0-2.500 1.200-4.500z"/><path fill="#f6c62c" d="M10 6h8.200q2 6-2.200 10-2.500 3-6 3l4-7z"/><circle cx="10" cy="10" r="4.300" fill="#fff"/><circle cx="10" cy="10" r="3.300" fill="#4a83e8"/></svg></button>
    <button class="run" aria-label="Command Prompt"><svg viewBox="0 0 20 20"><path fill="#0b0b0b" stroke="#aaa" d="M1 3h18v14H1z"/><path fill="#ddd" d="M1 3h18v2.500H1z"/><path stroke="#ddd" d="M3 8h3M7 9h3"/></svg></button>
    <button class="run" aria-label="OBS"><svg viewBox="0 0 20 20"><circle cx="10" cy="10" r="8.700" fill="#24262a" stroke="#bbb"/><path fill="none" stroke="#ccc" stroke-width="1.600" d="M6 5q0 5 4 5M15 7q-5-1-5 3M7 15q5-1 3-5"/></svg></button>
    <button class="run cur" aria-label="ANSA"><svg><use href="#logo"/></svg></button>
  </div>
  <div class="tray">
    <svg viewBox="0 0 14 14"><path fill="none" stroke="#ddd" stroke-width="1.200" d="M2 9l5-5 5 5"/></svg>
    <svg viewBox="0 0 14 14"><path fill="none" stroke="#bbb" d="M2 12Q3 3 12 2M5 12q1-6 7-7M8 12q1-3 4-4"/><circle cx="11.500" cy="11.500" r="1.200" fill="#ddd"/></svg>
    <svg viewBox="0 0 14 14"><path fill="none" stroke="#bbb" d="M1 5h2l3-3v10L3 9H1zM8 5q1.500 2 0 4M10 3q3 4 0 8M12 1.500q4 5.500 0 11"/></svg>
    <span class="lang">中</span>
    <time>19:09<br>2019/4/22</time>
    <button class="notes" aria-label="Notifications"><svg viewBox="0 0 20 20"><path fill="#fff" d="M1 2h14v11H7l-3 3v-3H1z"/><path stroke="#222" d="M3 5h10M3 7.500h10M3 10h6"/></svg><b>2</b></button>
  </div>
</footer>
</body>
</html>
```

FILE: styles.css
```css
* { box-sizing: border-box; }
body { margin: 0; min-height: 100vh; display: flex; flex-direction: column; background: #f0f0f0; color: #1a1a1a; font: 11px/16px Lato, "Open Sans", "Noto Sans CJK SC", sans-serif; position: relative; }
h1, h2, h3, p, fieldset { margin: 0; padding: 0; border: 0; font-weight: normal; font-size: inherit; }
button { font: inherit; color: inherit; border: 0; padding: 0; background: none; }
input { font: inherit; margin: 0; }
svg { display: block; flex: none; }
.sprite { position: absolute; width: 0; height: 0; }
.i8 { width: 8px; height: 8px; }
.i12 { width: 12px; height: 12px; }
.i14 { width: 14px; height: 14px; }
.i18 { width: 18px; height: 18px; }
.dark { color: #444; }
.grey { color: #777; }
.flip { transform: scaleX(-1); }

.titlebar { display: flex; align-items: center; height: 19px; padding-left: 1px; gap: 4px; background: #fff; color: #999; }
.titlebar h1 { font-size: 11px; flex: 1; }
.winbtns { display: flex; padding-right: 2px; }
.winbtns button { width: 39px; display: flex; justify-content: center; }
.winbtns svg { width: 10px; height: 10px; }

.menurow { display: flex; height: 18px; background: #fff; justify-content: space-between; }
.menu { display: flex; gap: 11px; padding-left: 6px; }
.search { display: flex; align-items: center; gap: 5px; width: 480px; margin: 1px 4px 0 0; padding: 0 5px; border: 1px solid #888; background: #fff; }
.search input { flex: 1; min-width: 0; border: 0; padding: 0; background: none; outline: 0; height: 14px; }
.search input::placeholder { color: #777; opacity: 1; }

.work { flex: 1; display: grid; grid-template-columns: 252px minmax(0, 1fr) 213px; min-height: 0; }
.dock { display: flex; align-items: center; justify-content: space-between; height: 14px; background: #dadada; padding: 0 4px 0 1px; font: 9px/14px "Liberation Mono", monospace; }
.dock button, .infotab button { width: 6px; color: #111; }
.dock svg, .infotab svg { width: 6px; height: 6px; stroke-width: 2; }

.left { display: flex; flex-direction: column; padding: 1px 0 1px; }
.left .dock { width: 248px; padding-right: 3px; }
.treebox { flex: 1; width: 244px; margin: 3px 0 4px 2px; background: #fff; border: 1px solid #999; border-right-color: #ccc; border-bottom-color: #ccc; }
.tree { border-collapse: collapse; table-layout: fixed; width: 173px; }
.tree th { font-weight: normal; text-align: left; height: 19px; padding: 0 0 0 3px; border-right: 1px solid #e3e3e3; }
.tree th:first-child { width: 17px; padding-left: 4px; border: 0; }
.tree .name { width: 107px; padding-left: 2px; border: 1px dotted #999; position: relative; }
.tree .name::after { content: ""; position: absolute; left: 50px; top: 0; border: 2px solid transparent; border-bottom-color: #111; border-top: 0; }
.bulb { width: 8px; height: 12px; }
.tree td { height: 16px; line-height: 16px; padding: 0; white-space: nowrap; }
.tree td:last-child { padding-left: 3px; }
.tree tbody tr:nth-child(even) { background: #eaeaea; }
.exp { display: inline-block; width: 15px; height: 10px; vertical-align: -1px; }
.tree .deep { padding-left: 28px; }
.tree input { display: block; appearance: none; width: 11px; height: 11px; margin-left: 2px; border: 1px solid #333; background: #fff; position: relative; }
.tree input:checked::after { content: ""; position: absolute; left: 1px; top: 1px; width: 6px; height: 3px; border: solid #333; border-width: 0 0 1px 1px; transform: rotate(-45deg); }
.tree .part::after { content: ""; position: absolute; inset: 2px; background: #222; }

.info { display: flex; gap: 4px; height: 72px; }
.infotab { width: 15px; background: #d8d8d8; display: flex; flex-direction: column; align-items: center; justify-content: space-between; padding: 4px 0 2px; }
.infotab span { writing-mode: vertical-rl; transform: rotate(180deg); font: 9px/12px "Liberation Mono", monospace; }
.logbox { display: grid; grid-template: 1fr 12px / 1fr 12px; width: 227px; margin: 2px 0 3px; border: 1px solid #999; background: #fff; }
.log { overflow: hidden; display: flex; flex-direction: column; justify-content: flex-end; padding: 0 0 13px 2px; font: 9px/11px "Liberation Mono", monospace; white-space: nowrap; min-width: 0; min-height: 0; }
.vbar, .hbar { display: flex; background: #f0f0f0; align-items: center; justify-content: space-between; }
.vbar { flex-direction: column; padding: 3px 0; }
.vbar svg, .hbar svg { width: 8px; height: 8px; }
.vbar i { width: 12px; height: 7px; margin-top: 16px; background: #cdcdcd; }
.hbar { padding: 0 3px; }
.hbar i { width: 70px; height: 12px; margin: 0 auto 0 3px; background: #cdcdcd; }
.expand { width: 9px; height: 9px; margin: 2px; }

.center { display: flex; flex-direction: column; min-width: 0; }
.bar { display: flex; align-items: center; }
.grp { display: flex; align-items: center; padding-left: 3px; border-left: 1px solid #d2d2d2; }
.grp button { width: 21px; height: 20px; display: flex; align-items: center; justify-content: center; position: relative; }
.grp svg { width: 16px; height: 16px; }
.grp .i14 { width: 14px; height: 14px; }
.grp .ca { width: 10px; }
.grp .narrow { width: 8px; }
.grp .slim { width: 20px; }
.grp .ca svg { width: 8px; height: 6px; }
.grp .mo { width: 8px; }
.grp .mo svg { width: 8px; height: 12px; }
.grp .on { background: #bfddf5; border: 1px solid #a5d2f3; }
.top { height: 23px; padding: 0 0 3px 1px; gap: 8px; }
.top .wide { margin-left: 3px; padding-left: 7px; }
.top .last { margin-left: 15px; }
.grp .letter { width: 15px; height: 15px; margin: 0 3px; border: 1px solid #333; border-top: 2px solid #6679b7; background: #f8f8f8; font: italic bold 12px/12px "Liberation Serif", serif; }

.view { flex: 1; position: relative; min-height: 400px; margin-left: 1px; overflow: hidden; color: #fff; font: bold 9px/13px "DejaVu Sans Mono", monospace; }
.scene { position: absolute; inset: 0; width: 100%; height: 100%; }
.axis { font: bold 9px "DejaVu Sans Mono", monospace; }
.caption { position: relative; padding: 1px 2px; }
.stats { position: absolute; left: 3px; top: 232px; width: 78px; border-collapse: collapse; }
.stats caption, .stats th { text-align: left; font-weight: bold; }
.stats th, .stats td { padding: 0; height: 13px; }
.stats td { text-align: right; }

.dialog { position: absolute; left: 498px; top: 171px; width: 145px; background: #fff; color: #1a1a1a; border: 1px solid #ddd; box-shadow: 0 2px 10px rgba(0, 0, 0, .5); font: 9px/13px "Liberation Mono", monospace; padding-bottom: 6px; }
.dtitle { display: flex; align-items: center; gap: 3px; height: 24px; padding: 0 9px 0 5px; border-bottom: 1px solid #ddd; font: 11px/16px Lato, "Open Sans", sans-serif; }
.dtitle h2 { flex: 1; }
.dtitle button svg { width: 9px; height: 9px; }
.dialog fieldset { display: flex; flex-direction: column; justify-content: space-between; height: 136px; margin: 9px 5px 5px 8px; }
.dialog label { display: flex; align-items: center; gap: 4px; }
.dialog label input { appearance: none; width: 11px; height: 11px; border: 1px solid #555; border-radius: 50%; background: #fff; }
.dialog label input:checked { background: #222; box-shadow: inset 0 0 0 1px #fff; }
.dfoot { display: flex; justify-content: space-between; margin: 0 5px; padding: 3px 1px 0 0; border-top: 1px solid #999; }
.dfoot button { width: 42px; height: 18px; background: #e1e1e1; border: 1px solid #adadad; }
.cursor { position: absolute; left: 95px; top: 6px; width: 9px; height: 13px; }

.status { display: flex; align-items: center; height: 14px; padding-left: 2px; font: 9px/14px "Liberation Mono", monospace; }
.redx { width: 8px; height: 8px; margin: 0 6px 0 1px; display: grid; place-items: center; background: #c5343c; color: #fff; }
.redx svg { width: 6px; height: 6px; stroke-width: 2; }
.hint { font: 11px/14px Lato, "Open Sans", sans-serif; padding-left: 9px; border-left: 1px solid #aaa; }

.low { display: grid; grid-template-columns: 261px 314px 1fr; height: 37px; padding-left: 2px; }
.low .grp { height: 32px; border-left: 2px dotted #c0c0c0; padding-left: 1px; }
.tight .grp { padding-left: 0; }
.low .pair { display: flex; gap: 14px; }
.grp .cap { flex-direction: column; justify-content: flex-start; color: #666; }
.grp .cap svg { height: 11px; width: 14px; }
.cap b { font: bold 8px/8px "Liberation Sans", sans-serif; }
.dk b { color: #111; }
.spin { display: flex; align-items: center; width: 36px; height: 14px; border: 1px solid #bbb; background: #f6f6f6; padding-right: 2px; }
.spin input { width: 100%; min-width: 0; border: 0; padding: 0 0 0 1px; color: #888; background: none; font-size: 10px; line-height: 12px; height: 12px; appearance: textfield; }
.spin input::-webkit-inner-spin-button { appearance: none; display: none; }
.spin svg { width: 6px; height: 12px; }

.right { display: flex; flex-direction: column; padding-left: 5px; background: #f0f0f0; }
.mesh { height: 28px; padding-bottom: 4px; }
.modules { flex: 1; padding: 7px 7px 0 4px; border: 1px solid #fafafa; border-top: 0; display: flex; flex-direction: column; gap: 5px; font: 10px/13px "DejaVu Sans Mono", monospace; }
.modules section { display: grid; grid-template-columns: repeat(3, minmax(0, 1fr)); gap: 1px 2px; }
.modules h3 { grid-column: span 2; font-weight: bold; display: flex; align-items: center; justify-content: center; padding-left: 4px; }
.modules button { height: 15px; display: flex; align-items: center; justify-content: center; background: #e1e1e1; border: 1px solid; border-color: #d4d4d4 #c0c0c0 #b8b8b8 #c8c8c8; white-space: nowrap; }
.modules section > span { height: 15px; }
.modules h3::after, .sub::after { content: ""; border: 3px solid transparent; border-left: 4px solid #111; border-right: 0; }
.modules .sub { padding-right: 1px; }
.modules .sub::after { margin-left: auto; }
.modules .sub::before { content: ""; margin-left: auto; }
.options { height: 79px; margin: 4px 3px 2px 1px; background: #fff; border: 1px solid #999; }

.ime { position: absolute; right: 0; bottom: 33px; height: 20px; width: 171px; display: flex; align-items: center; justify-content: space-between; padding-right: 5px; background: linear-gradient(90deg, transparent 20px, #fff 20px); color: #1f6fc0; font: bold 12px/18px "Noto Sans CJK SC", sans-serif; }
.ime svg { width: 14px; height: 14px; }
.ime .sogou { width: 24px; height: 24px; }

.taskbar { height: 33px; display: flex; background: #050d16; color: #fff; }
.start { width: 40px; display: grid; place-items: center; }
.start svg { width: 14px; height: 14px; }
.tsearch { display: flex; align-items: center; width: 287px; gap: 8px; padding: 0 11px 0 7px; background: #f2f2f2; }
.tsearch input { flex: 1; min-width: 0; border: 0; padding: 0; background: none; font: 13px/20px "Noto Sans CJK SC", sans-serif; }
.tsearch input::placeholder { color: #444; opacity: 1; }
.apps { display: flex; flex: 1; padding-left: 1px; }
.apps button { width: 34px; margin: 0 4px 0 3px; display: grid; place-items: center; border-bottom: 2px solid transparent; }
.apps svg { width: 20px; height: 20px; }
.apps .run { border-bottom-color: #76b9ed; }
.apps .cur { width: 41px; margin: 0; background: #3a4148; }
.youdao span { background: #e2231a; border-radius: 4px; font: bold 9px/20px "Noto Sans CJK SC", sans-serif; width: 20px; height: 20px; text-align: center; }
.tray { display: flex; align-items: center; gap: 6px; padding-right: 16px; }
.tray svg { width: 14px; height: 14px; }
.lang { font: 12px/16px "Noto Sans CJK SC", sans-serif; }
time { text-align: center; line-height: 15px; padding: 0 12px 0 4px; }
.notes { position: relative; }
.tray .notes svg { width: 20px; height: 20px; }
.notes b { position: absolute; right: -5px; bottom: -3px; width: 13px; height: 13px; border-radius: 50%; background: #333; border: 1px solid #888; font-size: 9px; line-height: 11px; }
```
